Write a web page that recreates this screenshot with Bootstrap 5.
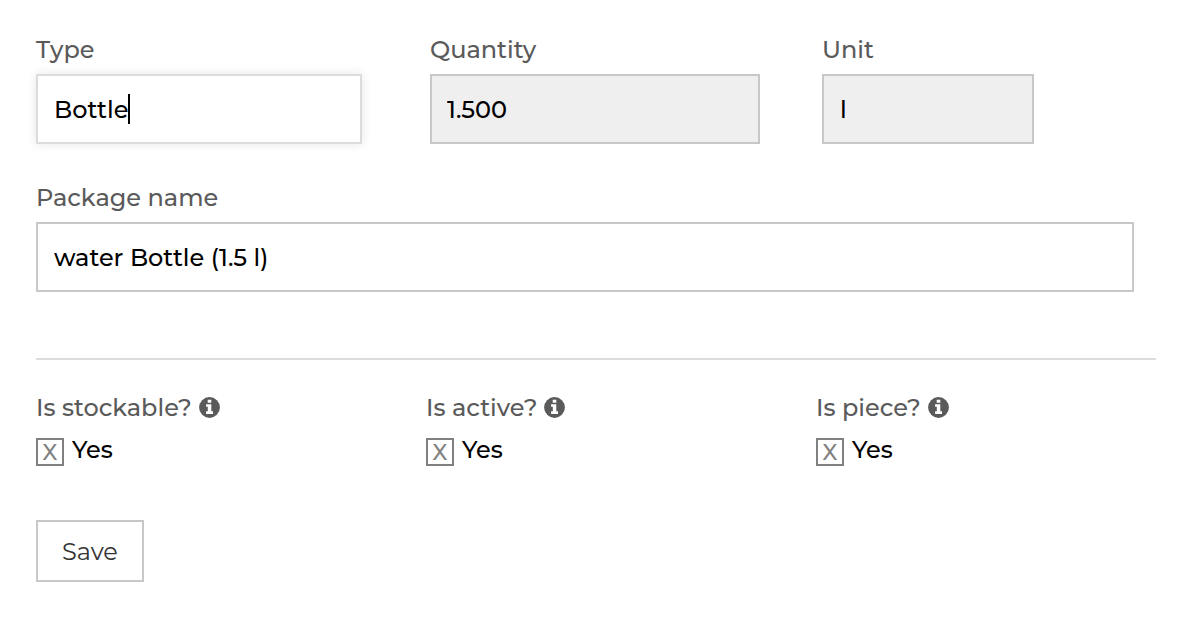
<!DOCTYPE html>
<html lang="en">
<head>
<meta charset="utf-8">
<meta name="viewport" content="width=device-width, initial-scale=1">
<title>Package</title>
<link rel="stylesheet" href="https://cdn.jsdelivr.net/npm/bootstrap@5.3.0/dist/css/bootstrap.min.css">
<style>
body { font-family: Montserrat, Inter, sans-serif; font-size: 24px; font-weight: 500; line-height: 32px; color: #000; background: #fff; }
.package-form { padding: 34px 36px; }
.measure-fields { display: grid; grid-template-columns: 394fr 392fr 334fr; margin-bottom: 38px; }
.form-label { color: #5a5a5a; margin-bottom: 8px; font-size: 24px; }
.form-control { height: 70px; padding: 0 16px; border: 2px solid #c8c8c8; border-radius: 0; font-size: 24px; font-weight: 500; line-height: 32px; color: #000; background: #fff; }
.form-control:disabled { background: #efefef; color: #000; opacity: 1; }
.type-box { width: calc(100% - 68px); }
.type-box .form-control { border-color: #dcdcdc; box-shadow: 0 0 10px rgba(0,0,0,.1); }
.text-caret { left: 92px; top: 20px; width: 2px; height: 30px; background: #000; }
.quantity-box { width: calc(100% - 62px); padding: 0 15px; }
.unit-box { width: 63.5%; }
.name-box { width: 98%; }
.divider { margin: 66px 0 32px; border-top: 2px solid #dcdcdc; opacity: 1; }
.flags { --bs-gutter-x: 50px; margin-bottom: 54px; }
.flag-title { color: #5a5a5a; margin-bottom: 10px; gap: 7px; }
.info-icon { width: 21px; height: 22px; }
.flag-check { appearance: none; width: 28px; height: 28px; margin: 0; border: 2px solid #808080; display: grid; place-items: center; color: #808080; font-size: 22px; font-weight: 500; line-height: 26px; }
.flag-check:checked::before { content: "X"; }
.flag-text { line-height: 32px; }
.btn-save { height: 62px; padding: 2px 24px 0; border: 2px solid #c8c8c8; border-radius: 0; color: #333; font-size: 24px; font-weight: 400; background: #fff; }
</style>
</head>
<body>
<svg class="d-none" aria-hidden="true">
  <symbol id="info" viewBox="0 0 21 22">
    <circle cx="10.500" cy="10.500" r="10.400" fill="#5a5a5a"/>
    <path fill="#fff" d="M8.700 2.700h3.600v3H8.700zM7.100 7.200h5.200v7.100h1.700v2.600H7.100v-2.600h1.700V9.800H7.100z"/>
  </symbol>
</svg>
<form class="package-form container-fluid">
  <div class="measure-fields">
    <div>
      <label class="form-label d-block" for="type">Type</label>
      <div class="type-box position-relative">
        <input class="form-control" id="type" type="text" value="Bottle">
        <span class="text-caret position-absolute"></span>
      </div>
    </div>
    <div>
      <label class="form-label d-block" for="quantity">Quantity</label>
      <input class="form-control quantity-box" id="quantity" type="text" value="1.500" disabled>
    </div>
    <div>
      <label class="form-label d-block" for="unit">Unit</label>
      <input class="form-control unit-box" id="unit" type="text" value="l" disabled>
    </div>
  </div>
  <label class="form-label d-block" for="name">Package name</label>
  <input class="form-control name-box" id="name" type="text" value="water Bottle (1.5 l)">
  <hr class="divider">
  <div class="row flags">
    <div class="col-4">
      <div class="flag-title d-flex align-items-center">Is stockable? <svg class="info-icon"><use href="#info"/></svg></div>
      <div class="d-flex align-items-end gap-2"><input class="flag-check" type="checkbox" id="stockable" checked><label class="flag-text" for="stockable">Yes</label></div>
    </div>
    <div class="col-4">
      <div class="flag-title d-flex align-items-center">Is active? <svg class="info-icon"><use href="#info"/></svg></div>
      <div class="d-flex align-items-end gap-2"><input class="flag-check" type="checkbox" id="active" checked><label class="flag-text" for="active">Yes</label></div>
    </div>
    <div class="col-4">
      <div class="flag-title d-flex align-items-center">Is piece? <svg class="info-icon"><use href="#info"/></svg></div>
      <div class="d-flex align-items-end gap-2"><input class="flag-check" type="checkbox" id="piece" checked><label class="flag-text" for="piece">Yes</label></div>
    </div>
  </div>
  <button class="btn btn-save" type="button">Save</button>
</form>
<script src="https://cdn.jsdelivr.net/npm/bootstrap@5.3.0/dist/js/bootstrap.bundle.min.js"></script>
</body>
</html>
